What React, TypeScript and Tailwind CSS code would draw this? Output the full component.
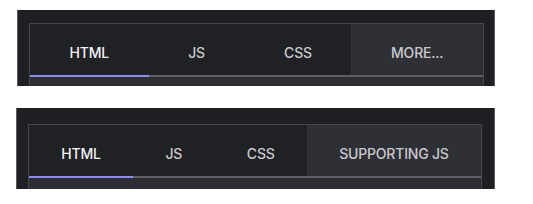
const font = { fontFamily: "Inter, 'Noto Sans', sans-serif" };

type Tab = { label: string; active?: boolean; extra?: boolean };

function TabPanel({
	tabs,
	className,
}: {
	tabs: Tab[];
	className: string;
}) {
	return (
		<div
			className={`overflow-hidden border-x border-[#5b5b60] bg-[#1f2024] ${className}`}
		>
			<div className="border border-[#47484d] bg-[#2d2e33]">
				<div className="flex">
					{tabs.map((tab) => (
						<div
							key={tab.label}
							className={`flex h-[53px] flex-auto items-center justify-center whitespace-nowrap border-b-2 pt-[5px] text-[14px] font-medium uppercase tracking-[-0.2px] ${
								tab.active
									? "border-[#8b8cf6] text-[#f2f2f3]"
									: "border-[#5d5e66] text-[#c9c9cc]"
							} ${tab.extra ? "bg-[#2f3035]" : "bg-[#202125]"}`}
						>
							{tab.label}
						</div>
					))}
				</div>
				<div className="h-10" />
			</div>
		</div>
	);
}

export default function App() {
	return (
		<div className="h-[204px] w-[533px] bg-white pt-[10px]" style={font}>
			<TabPanel
				className="ml-[17px] h-[76px] w-[478px] pl-[11px] pr-[10px] pt-[13px]"
				tabs={[
					{ label: "HTML", active: true },
					{ label: "JS" },
					{ label: "CSS" },
					{ label: "More...", extra: true },
				]}
			/>
			<TabPanel
				className="ml-[16px] mt-[22px] h-[81px] w-[479px] pl-[11px] pr-[12px] pt-[16px]"
				tabs={[
					{ label: "HTML", active: true },
					{ label: "JS" },
					{ label: "CSS" },
					{ label: "Supporting JS", extra: true },
				]}
			/>
		</div>
	);
}
